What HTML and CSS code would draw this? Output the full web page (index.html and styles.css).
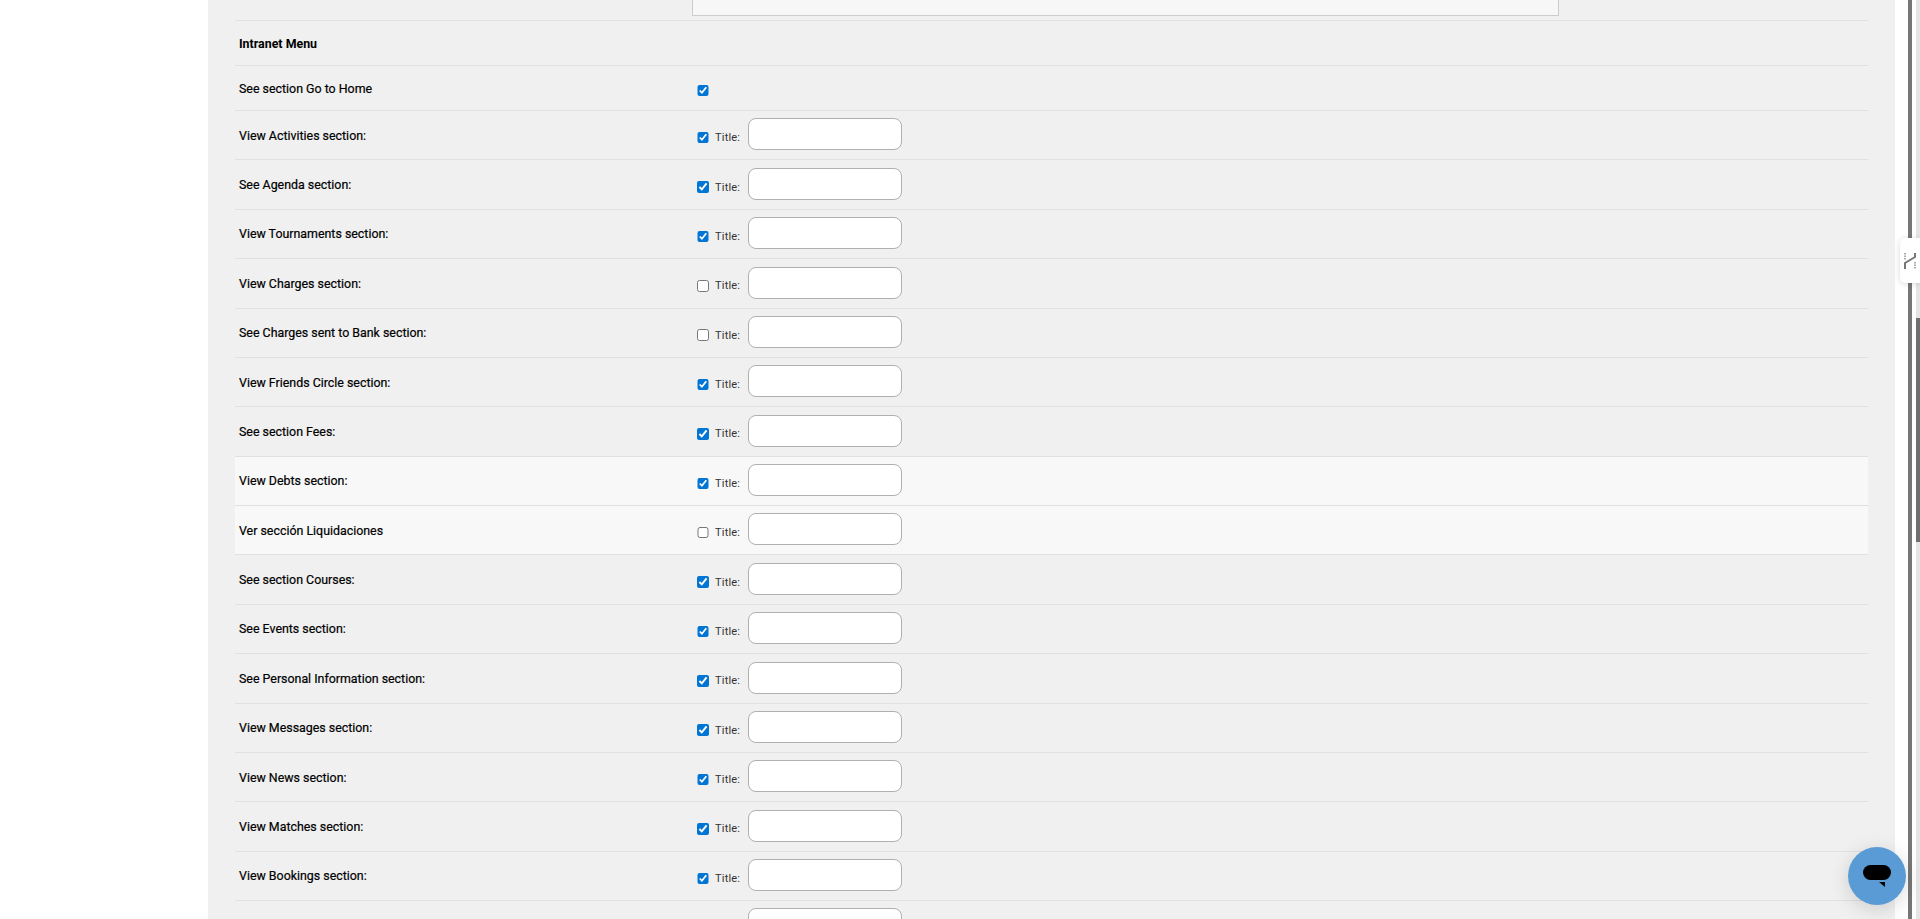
FILE: index.html
```html
<!DOCTYPE html>
<html lang="en">
<head>
<meta charset="utf-8">
<title>Intranet Menu</title>
<link rel="stylesheet" href="styles.css">
</head>
<body>
<div class="page">
  <main class="panel">
    <div class="top-row"><div class="label-col"></div><div class="top-box"></div></div>
    <div class="row head"><span class="name">Intranet Menu</span></div>
    <div class="row plain"><label class="name">See section Go to Home</label><div class="ctl"><input type="checkbox" class="chk" checked></div></div>
    <div class="row"><label class="name">View Activities section:</label><div class="ctl"><input type="checkbox" class="chk" checked><span class="ttl">Title:</span><input class="txt" type="text"></div></div>
    <div class="row"><label class="name">See Agenda section:</label><div class="ctl"><input type="checkbox" class="chk" checked><span class="ttl">Title:</span><input class="txt" type="text"></div></div>
    <div class="row"><label class="name">View Tournaments section:</label><div class="ctl"><input type="checkbox" class="chk" checked><span class="ttl">Title:</span><input class="txt" type="text"></div></div>
    <div class="row"><label class="name">View Charges section:</label><div class="ctl"><input type="checkbox" class="chk"><span class="ttl">Title:</span><input class="txt" type="text"></div></div>
    <div class="row"><label class="name">See Charges sent to Bank section:</label><div class="ctl"><input type="checkbox" class="chk"><span class="ttl">Title:</span><input class="txt" type="text"></div></div>
    <div class="row"><label class="name">View Friends Circle section:</label><div class="ctl"><input type="checkbox" class="chk" checked><span class="ttl">Title:</span><input class="txt" type="text"></div></div>
    <div class="row"><label class="name">See section Fees:</label><div class="ctl"><input type="checkbox" class="chk" checked><span class="ttl">Title:</span><input class="txt" type="text"></div></div>
    <div class="row hover"><label class="name">View Debts section:</label><div class="ctl"><input type="checkbox" class="chk" checked><span class="ttl">Title:</span><input class="txt" type="text"></div></div>
    <div class="row hover"><label class="name">Ver sección Liquidaciones</label><div class="ctl"><input type="checkbox" class="chk"><span class="ttl">Title:</span><input class="txt" type="text"></div></div>
    <div class="row"><label class="name">See section Courses:</label><div class="ctl"><input type="checkbox" class="chk" checked><span class="ttl">Title:</span><input class="txt" type="text"></div></div>
    <div class="row"><label class="name">See Events section:</label><div class="ctl"><input type="checkbox" class="chk" checked><span class="ttl">Title:</span><input class="txt" type="text"></div></div>
    <div class="row"><label class="name">See Personal Information section:</label><div class="ctl"><input type="checkbox" class="chk" checked><span class="ttl">Title:</span><input class="txt" type="text"></div></div>
    <div class="row"><label class="name">View Messages section:</label><div class="ctl"><input type="checkbox" class="chk" checked><span class="ttl">Title:</span><input class="txt" type="text"></div></div>
    <div class="row"><label class="name">View News section:</label><div class="ctl"><input type="checkbox" class="chk" checked><span class="ttl">Title:</span><input class="txt" type="text"></div></div>
    <div class="row"><label class="name">View Matches section:</label><div class="ctl"><input type="checkbox" class="chk" checked><span class="ttl">Title:</span><input class="txt" type="text"></div></div>
    <div class="row"><label class="name">View Bookings section:</label><div class="ctl"><input type="checkbox" class="chk" checked><span class="ttl">Title:</span><input class="txt" type="text"></div></div>
    <div class="row"><label class="name"></label><div class="ctl"><input type="checkbox" class="chk" checked><span class="ttl"></span><input class="txt" type="text"></div></div>
  </main>
  <div class="gutter"></div>
  <div class="outer-bar"></div>
  <div class="inner-bar"><div class="thumb"></div></div>
</div>
<div class="side-tab">
  <svg width="14" height="18" viewBox="0 0 14 18"><path d="M2 17V11L12 5V1" fill="none" stroke="#777" stroke-width="2"/><path d="M2 1V8M12 10V17" fill="none" stroke="#aaa" stroke-width="2" stroke-dasharray="1.5 1"/></svg>
</div>
<div class="chat">
  <svg width="30" height="24" viewBox="0 0 30 24"><rect x="1" y="1" width="28" height="15" rx="7.5" fill="#000"/><path d="M17 18h6v5z" fill="#000"/></svg>
</div>
</body>
</html>
```
FILE: styles.css
```css
* { box-sizing: border-box; }
html, body { margin: 0; padding: 0; height: 919px; overflow: hidden; background: #fff; }
body { font-family: Roboto, "Liberation Sans", sans-serif; color: #111; }
.page { display: flex; height: 919px; overflow: hidden; padding-left: 208px; }
.panel { width: 1687px; flex: none; background: #f0f0f0; padding: 0 27px; height: 919px; overflow: hidden; }
.top-row { display: flex; height: 21px; border-bottom: 1px solid #e0e0e0; }
.label-col { width: 457px; }
.top-box { width: 867px; height: 16px; background: #f7f7f7; border: 1px solid #ccc; border-top: 0; }
.row { display: flex; height: 49.38px; border-bottom: 1px solid #e0e0e0; padding-left: 4px; align-items: center; }
.row.head, .row.plain { height: 45px; }
.row.hover { background: #f8f8f8; }
.name { width: 458px; flex: none; font-size: 12.4px; font-weight: 400; color: #000; -webkit-text-stroke: .2px #000; }
.head .name { font-weight: 700; -webkit-text-stroke: 0; }
.ctl { display: flex; align-items: center; }
.chk { width: 11.5px; height: 11.5px; margin: 5px 0 0 0; accent-color: #0075d4; }
.plain .chk { margin-top: 5px; }
.ttl { font-size: 11px; color: #333; margin: 5px 0 0 6.5px; width: 27px; letter-spacing: .2px; }
.txt { width: 154px; height: 32px; margin: 0 0 1.5px 6px; background: #fff; border: 1px solid #b0b0b0; border-radius: 8px; }
.gutter { width: 13px; flex: none; background: #fff; }
.outer-bar { width: 4px; flex: none; background: #777; }
.inner-bar { width: 4px; flex: none; margin-left: 4px; background: #e5e5e5; height: 919px; padding-top: 318px; }
.thumb { height: 224px; background: #6f6f6f; }
.side-tab { position: fixed; left: 1900px; top: 238px; width: 20px; height: 45px; background: #fff; border-radius: 6px 0 0 6px; box-shadow: 0 1px 6px rgba(0,0,0,.15); display: flex; align-items: center; padding-left: 3px; }
.chat { position: fixed; left: 1848px; top: 847px; width: 58px; height: 58px; border-radius: 50%; background: #5b9bd5; display: flex; align-items: center; justify-content: center; box-shadow: 0 4px 20px rgba(0,0,0,.15); }
```
